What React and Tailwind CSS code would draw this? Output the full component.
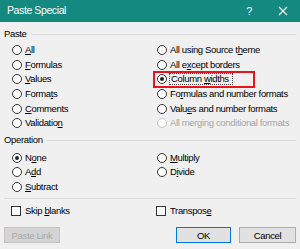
import React from "react";

const font = { fontFamily: '"Liberation Sans", Arial, sans-serif' };

function Label({ text, u }) {
  // u = index of the access key letter
  if (u == null || u < 0) return <span>{text}</span>;
  return (
    <span>
      {text.slice(0, u)}
      <span className="underline underline-offset-[1px]">{text[u]}</span>
      {text.slice(u + 1)}
    </span>
  );
}

function Radio({ text, u, checked, disabled }) {
  return (
    <div className="flex items-center h-[14.6px] whitespace-nowrap">
      <span
        className={`w-[10px] h-[10px] shrink-0 rounded-full border flex items-center justify-center bg-white ${
          disabled ? "border-[#c4c4c4]" : "border-[#333]"
        }`}
      >
        {checked && <span className="w-[4px] h-[4px] rounded-full bg-[#222]" />}
      </span>
      <span className={`ml-[3px] ${disabled ? "text-[#a6a6a6]" : "text-black"}`}>
        {disabled ? text : <Label text={text} u={u} />}
      </span>
    </div>
  );
}

function Check({ text, u }) {
  return (
    <div className="flex items-center h-[14px] whitespace-nowrap">
      <span className="w-[10px] h-[10px] border border-[#333] bg-white" />
      <span className="ml-[4px] text-black">
        <Label text={text} u={u} />
      </span>
    </div>
  );
}

function Section({ title }) {
  return (
    <div className="flex items-center h-[12px] pl-[4px] pr-[4px] text-black">
      <span>{title}</span>
      <span className="flex-1 h-px bg-[#dadada] ml-[4px]" />
    </div>
  );
}

export default function App() {
  return (
    <div
      className="w-[300px] h-[249px] bg-[#f0f0f0] text-[9.5px] tracking-[-0.35px] overflow-hidden"
      style={font}
    >
      {/* title bar */}
      <div className="h-[22px] bg-[#13897f] text-white flex items-center pl-[7px]">
        <span className="text-[10.5px] tracking-[-0.4px]">Paste Special</span>
        <span className="ml-auto mr-[26px] text-[11px]">?</span>
        <svg width="10" height="10" viewBox="0 0 10 10" className="mr-[12px]">
          <path d="M1 1 L9 9 M9 1 L1 9" stroke="white" strokeWidth="1.1" />
        </svg>
      </div>

      <div className="pt-[6px]">
        <Section title="Paste" />
        <div className="grid grid-cols-[145px_1fr] pl-[12px] pt-[3px]">
          <div>
            <Radio text="All" u={0} />
            <Radio text="Formulas" u={0} />
            <Radio text="Values" u={0} />
            <Radio text="Formats" u={5} />
            <Radio text="Comments" u={0} />
            <Radio text="Validation" u={9} />
          </div>
          <div>
            <Radio text="All using Source theme" u={18} />
            <Radio text="All except borders" u={5} />
            <div className="relative">
              <div className="absolute left-[-4px] top-[-1px] w-[102px] h-[17px] border-2 border-[#e8141b]" />
              <div className="flex items-center h-[14.6px] whitespace-nowrap">
                <span className="w-[10px] h-[10px] rounded-full border border-[#333] bg-white flex items-center justify-center">
                  <span className="w-[4px] h-[4px] rounded-full bg-[#222]" />
                </span>
                <span className="ml-[2px] pl-[1px] pr-[3px] border border-dotted border-[#444] leading-[10px] text-black">
                  <Label text="Column widths" u={7} />
                </span>
              </div>
            </div>
            <Radio text="Formulas and number formats" u={2} />
            <Radio text="Values and number formats" u={4} />
            <Radio text="All merging conditional formats" disabled />
          </div>
        </div>

        <div className="pt-[4px]">
          <Section title="Operation" />
        </div>
        <div className="grid grid-cols-[145px_1fr] pl-[12px] pt-[4px]">
          <div>
            <Radio text="None" u={1} checked />
            <Radio text="Add" u={1} />
            <Radio text="Subtract" u={0} />
          </div>
          <div>
            <Radio text="Multiply" u={0} />
            <Radio text="Divide" u={1} />
          </div>
        </div>

        <div className="h-px bg-[#dadada] mx-[4px] mt-[4px]" />

        <div className="grid grid-cols-[145px_1fr] pl-[11px] pt-[5px]">
          <Check text="Skip blanks" u={5} />
          <Check text="Transpose" u={8} />
        </div>

        <div className="flex items-center pl-[4px] pr-[4px] pt-[9px]">
          <button className="w-[56px] h-[16px] bg-[#d4d4d4] border border-[#c4c4c4] text-[#a8a8a8] leading-none">
            Paste Link
          </button>
          <button className="ml-auto w-[55px] h-[16px] bg-[#e1e1e1] border border-[#0078d7] text-black leading-none">
            OK
          </button>
          <button className="ml-[8px] w-[57px] h-[16px] bg-[#e1e1e1] border border-[#adadad] text-black leading-none">
            Cancel
          </button>
        </div>
      </div>
    </div>
  );
}
